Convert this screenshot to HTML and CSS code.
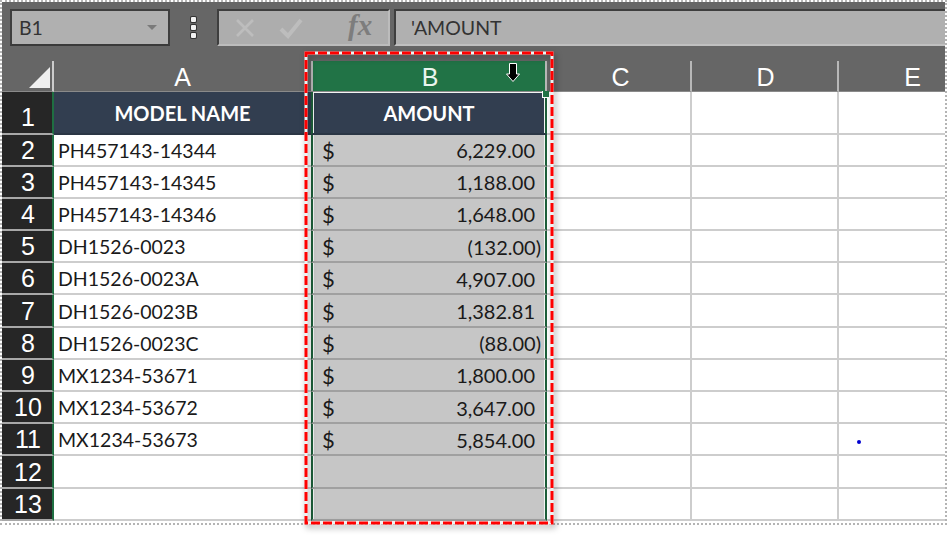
FILE: index.html
```html
<!DOCTYPE html>
<html lang="en">
<head>
<meta charset="utf-8">
<title>Amount column selected</title>
<link rel="stylesheet" href="styles.css">
</head>
<body>
<div class="sheet">
  <div class="toolbar">
    <div class="namebox"><span>B1</span><i class="caret"></i></div>
    <div class="kebab"><i></i><i></i><i></i></div>
    <div class="fnbtns">
      <svg class="ico" width="26" height="22" viewBox="0 0 26 22"><path d="M4 3L20 19M20 3L4 19" stroke="#bdbdbd" stroke-width="2.6" fill="none"/></svg>
      <svg class="ico" width="26" height="22" viewBox="0 0 26 22"><path d="M3 12L10 19L23 3" stroke="#bdbdbd" stroke-width="4" fill="none"/></svg>
      <span class="fx">fx</span>
    </div>
    <div class="formula">'AMOUNT</div>
  </div>
  <div class="grid">
    <div class="corner"><i></i></div>
    <div class="ch">A</div>
    <div class="ch sel">B</div>
    <div class="ch">C</div>
    <div class="ch">D</div>
    <div class="ch">E</div>

    <div class="rh first">1</div><div class="c th">MODEL NAME</div><div class="c th b">AMOUNT</div><div class="c"></div><div class="c"></div><div class="c"></div>
    <div class="rh">2</div><div class="c t">PH457143-14344</div><div class="c b"><span class="usd">$</span><span>6,229.00</span></div><div class="c"></div><div class="c"></div><div class="c"></div>
    <div class="rh">3</div><div class="c t">PH457143-14345</div><div class="c b"><span class="usd">$</span><span>1,188.00</span></div><div class="c"></div><div class="c"></div><div class="c"></div>
    <div class="rh">4</div><div class="c t">PH457143-14346</div><div class="c b"><span class="usd">$</span><span>1,648.00</span></div><div class="c"></div><div class="c"></div><div class="c"></div>
    <div class="rh">5</div><div class="c t">DH1526-0023</div><div class="c b neg"><span class="usd">$</span><span>(132.00)</span></div><div class="c"></div><div class="c"></div><div class="c"></div>
    <div class="rh">6</div><div class="c t">DH1526-0023A</div><div class="c b"><span class="usd">$</span><span>4,907.00</span></div><div class="c"></div><div class="c"></div><div class="c"></div>
    <div class="rh">7</div><div class="c t">DH1526-0023B</div><div class="c b"><span class="usd">$</span><span>1,382.81</span></div><div class="c"></div><div class="c"></div><div class="c"></div>
    <div class="rh">8</div><div class="c t">DH1526-0023C</div><div class="c b neg"><span class="usd">$</span><span>(88.00)</span></div><div class="c"></div><div class="c"></div><div class="c"></div>
    <div class="rh">9</div><div class="c t">MX1234-53671</div><div class="c b"><span class="usd">$</span><span>1,800.00</span></div><div class="c"></div><div class="c"></div><div class="c"></div>
    <div class="rh">10</div><div class="c t">MX1234-53672</div><div class="c b"><span class="usd">$</span><span>3,647.00</span></div><div class="c"></div><div class="c"></div><div class="c"></div>
    <div class="rh">11</div><div class="c t">MX1234-53673</div><div class="c b"><span class="usd">$</span><span>5,854.00</span></div><div class="c"></div><div class="c"></div><div class="c"></div>
    <div class="rh">12</div><div class="c"></div><div class="c b"></div><div class="c"></div><div class="c"></div><div class="c"></div>
    <div class="rh">13</div><div class="c"></div><div class="c b"></div><div class="c"></div><div class="c"></div><div class="c"></div>
  </div>

  <div class="handle"></div>
  <svg class="cursor" width="14" height="20" viewBox="0 0 14 20"><path d="M3.5 .5H10.5V11H13.5L7 18.5L.5 11H3.5Z" fill="#000" stroke="#fff" stroke-width="1"/></svg>
  <i class="dot"></i>
  <svg class="dashes" width="256" height="490" viewBox="0 0 256 490"><rect x="4" y="4" width="246" height="470" fill="none" stroke="#f0f0f0" stroke-width="3"/><rect x="4" y="4" width="246" height="470" fill="none" stroke="#ff0000" stroke-width="3" stroke-dasharray="9 3"/></svg>
</div>
</body>
</html>
```
FILE: styles.css
```css
* { box-sizing: border-box; }
html, body { margin: 0; background: #fff; }
body { width: 947px; height: 537px; overflow: hidden; font-family: Lato, sans-serif; }

.sheet {
  position: relative;
  width: 947px;
  height: 525px;
  border: 2px dotted #b4b4b4;
  background: #fff;
}

.toolbar {
  height: 59px;
  background: #666;
  display: flex;
  align-items: flex-start;
  padding: 7px 0 0 8px;
}
.namebox {
  width: 160px;
  height: 37px;
  background: #b0b0b0;
  border: 2px solid #3e3e3e;
  border-bottom-color: #3a3a3a;
  display: flex;
  align-items: center;
  justify-content: space-between;
  padding: 0 11px 0 7px;
  font-size: 19.5px;
  color: #333;
}
.caret {
  width: 0;
  height: 0;
  border: 5px solid transparent;
  border-top: 5px solid #7a7a7a;
  border-bottom: 0;
}
.kebab {
  width: 47px;
  height: 37px;
  display: flex;
  flex-direction: column;
  align-items: center;
  justify-content: center;
  gap: 3px;
}
.kebab i {
  width: 5px;
  height: 5px;
  background: #f2f2f2;
  border-radius: 1px;
  box-shadow: 0 0 0 1px #333;
}
.fnbtns {
  width: 173px;
  height: 37px;
  background: #adadad;
  border: 2px solid #3e3e3e;
  border-right-color: #bcbcbc;
  border-bottom-color: #bcbcbc;
  display: flex;
  align-items: center;
  gap: 19px;
  padding-left: 14px;
}
.fx {
  font: italic 700 29px "Liberation Serif", serif;
  color: #7d7d7d;
  margin-left: 25px;
  margin-top: -4px;
}
.formula {
  flex: 1;
  height: 37px;
  margin-left: 4px;
  background: #b0b0b0;
  border: 2px solid #3e3e3e;
  border-bottom-color: #c0c0c0;
  border-right: 0;
  padding-left: 15px;
  font-size: 19.5px;
  line-height: 33px;
  color: #333;
}

.grid {
  display: grid;
  grid-template-columns: 52px 257px 236px 145px 147px 147px;
  grid-template-rows: 31px 42.5px repeat(12, 32.2px);
  overflow: hidden;
  height: 462px;
}
.corner, .ch {
  background: #666;
  border-bottom: 1px solid #8a8a8a;
}
.corner { border-right: 2px solid #ccc; position: relative; }
.corner i {
  position: absolute;
  right: 2px;
  bottom: 3px;
  width: 0;
  height: 0;
  border-style: solid;
  border-width: 0 0 21px 21px;
  border-color: transparent transparent #efefef transparent;
}
.ch {
  display: flex;
  align-items: center;
  justify-content: center;
  font: 25px "Liberation Sans", sans-serif;
  color: #fff;
  border-right: 2px solid #b8b8b8;
  padding: 3px 0 0 2px;
}
.ch:nth-child(2) { border-right: 0; padding-left: 0; }
.ch.sel { background: #217346; color: #eaf5ee; box-shadow: inset 2px 0 0 #b8b8b8; padding-left: 4px; }
.ch:nth-child(4) { padding-left: 4px; }
.rh {
  background: #262626;
  color: #fff;
  font: 25px "Liberation Sans", sans-serif;
  display: flex;
  align-items: flex-end;
  justify-content: center;
  border-bottom: 2px solid #a8a8a8;
  border-right: 2px solid #1f6f42;
  padding-left: 2px;
  line-height: 30px;
}
.rh.first { padding-bottom: 1px; }
.c {
  border-right: 2px solid #cdcdcd;
  border-bottom: 2px solid #cdcdcd;
  display: flex;
  align-items: center;
  padding-top: 1px;
  font-size: 19.5px;
  color: #1a1a1a;
  min-width: 0;
  white-space: nowrap;
}
.grid > .c:nth-child(6n+2) { border-right: 0; }
.t { padding-left: 4px; }
.th {
  background: #323e50;
  color: #fff;
  font-weight: 700;
  font-size: 20px;
  justify-content: center;
  border-right-color: #323e50;
  border-bottom-color: #2b3645;
}
.b {
  background: #c6c6c6;
  border-right: 2px solid #1d5f3a;
  border-left: 2px solid #1d5f3a;
  border-bottom-color: #a0a0a0;
  box-shadow: inset 1px 0 0 #f4f4f4, inset -1px 0 0 #f4f4f4;
  justify-content: space-between;
  padding: 1px 10px 0 9px;
  font-size: 20px;
}
.b.neg { padding-right: 4px; }
.usd { font-size: 22px; }
.th.b {
  background: #323e50;
  justify-content: center;
  padding: 1px 0 0;
  border-bottom-color: #2b3645;
  box-shadow: inset 1px 1px 0 #f4f4f4, inset -1px 0 0 #f4f4f4;
}

.handle {
  position: absolute;
  left: 540px;
  top: 89px;
  width: 7px;
  height: 7px;
  background: #217346;
  border-left: 1px solid #fff;
  border-bottom: 1px solid #fff;
}
.cursor { position: absolute; left: 504px; top: 61px; }
.dot {
  position: absolute;
  left: 855px;
  top: 438px;
  width: 4px;
  height: 4px;
  background: #0000d0;
  border-radius: 50%;
}
.dashes {
  position: absolute;
  left: 300px;
  top: 47px;
  filter: drop-shadow(2px 3px 3px rgba(0, 0, 0, 0.35));
}
```
